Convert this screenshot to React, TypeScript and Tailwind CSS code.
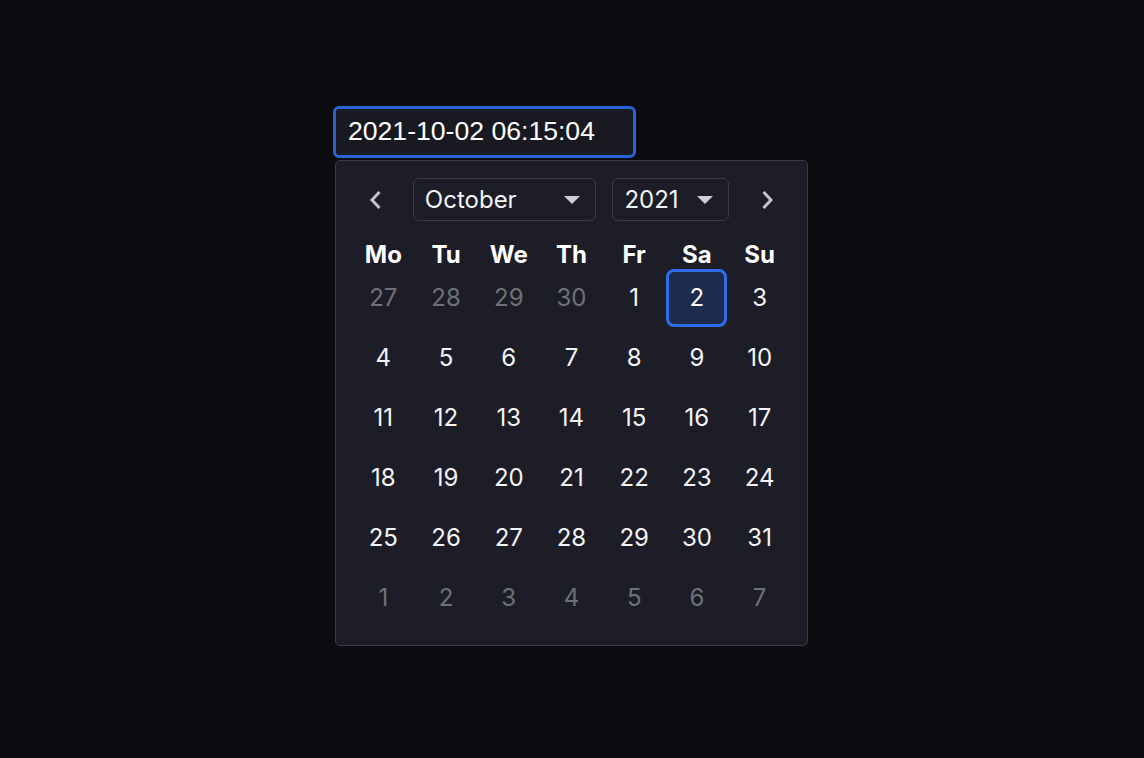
import React from 'react';

const weekDays = ['Mo', 'Tu', 'We', 'Th', 'Fr', 'Sa', 'Su'];

const days = [
  { n: 27, muted: true }, { n: 28, muted: true }, { n: 29, muted: true }, { n: 30, muted: true },
  ...Array.from({ length: 31 }, (_, i) => ({ n: i + 1, muted: false })),
  ...Array.from({ length: 7 }, (_, i) => ({ n: i + 1, muted: true })),
];

const Chevron = ({ dir }: { dir: 'left' | 'right' }) => (
  <svg width="14" height="20" viewBox="0 0 14 20" fill="none">
    <path
      d={dir === 'left' ? 'M10.5 3L4 10l6.5 7' : 'M3.5 3L10 10l-6.5 7'}
      stroke="#c4c4c8"
      strokeWidth="3"
      strokeLinecap="square"
      strokeLinejoin="miter"
    />
  </svg>
);

const Caret = () => (
  <svg width="16" height="8" viewBox="0 0 16 8">
    <path d="M0 0h16L8 8z" fill="#d0d0d4" />
  </svg>
);

const App = () => {
  return (
    <div className="min-h-screen w-full bg-[#0c0d11] pt-[106px] pl-[333px]" style={{ fontFamily: 'Inter, "Noto Sans", sans-serif' }}>
      {/* Input */}
      <div
        className="w-[303px] h-[52px] border-[3px] border-[#2a63d6] rounded-[6px] bg-[#191a21] flex items-center px-3 text-[26.6px] text-white"
        style={{ fontFamily: '"Liberation Sans", Arial, sans-serif' }}
      >
        2021-10-02 06:15:04
      </div>

      {/* Popup */}
      <div className="ml-[2px] mt-[2px] w-[473px] border border-[#3b3d46] rounded-[5px] bg-[#1c1d26] px-4 pt-[17px] pb-[19px] text-[24px] text-[#f4f4f6]">
        {/* Nav */}
        <div className="flex items-center h-[43px]">
          <button className="w-[46px] h-[43px] flex items-center justify-center">
            <Chevron dir="left" />
          </button>
          <div className="ml-[15px] w-[184px] h-[43px] border border-[#3b3d46] rounded-[6px] flex items-center justify-between pl-[11px] pr-[15px]">
            <span>October</span>
            <Caret />
          </div>
          <div className="ml-4 w-[117px] h-[43px] border border-[#3b3d46] rounded-[6px] flex items-center justify-between pl-[11px] pr-[15px]">
            <span>2021</span>
            <Caret />
          </div>
          <button className="ml-4 w-[46px] h-[43px] flex items-center justify-center">
            <Chevron dir="right" />
          </button>
        </div>

        {/* Week header */}
        <div className="grid grid-cols-7 mt-4 h-[33px] pb-[2px] items-center">
          {weekDays.map((d) => (
            <div key={d} className="text-center font-bold text-white">
              {d}
            </div>
          ))}
        </div>

        {/* Days */}
        <div className="grid grid-cols-7 gap-y-1">
          {days.map((d, i) => {
            const selected = !d.muted && d.n === 2;
            return (
              <div key={i} className="flex justify-center">
                <div
                  className={
                    selected
                      ? 'w-[61px] h-[58px] -my-px flex items-center justify-center rounded-[8px] border-[3px] border-[#2f6ee8] bg-[#1d2b4d] text-white'
                      : d.muted
                      ? 'w-[60px] h-[56px] flex items-center justify-center text-[#6f7178]'
                      : 'w-[60px] h-[56px] flex items-center justify-center text-[#f4f4f6]'
                  }
                >
                  {d.n}
                </div>
              </div>
            );
          })}
        </div>
      </div>
    </div>
  );
};

export default App;
